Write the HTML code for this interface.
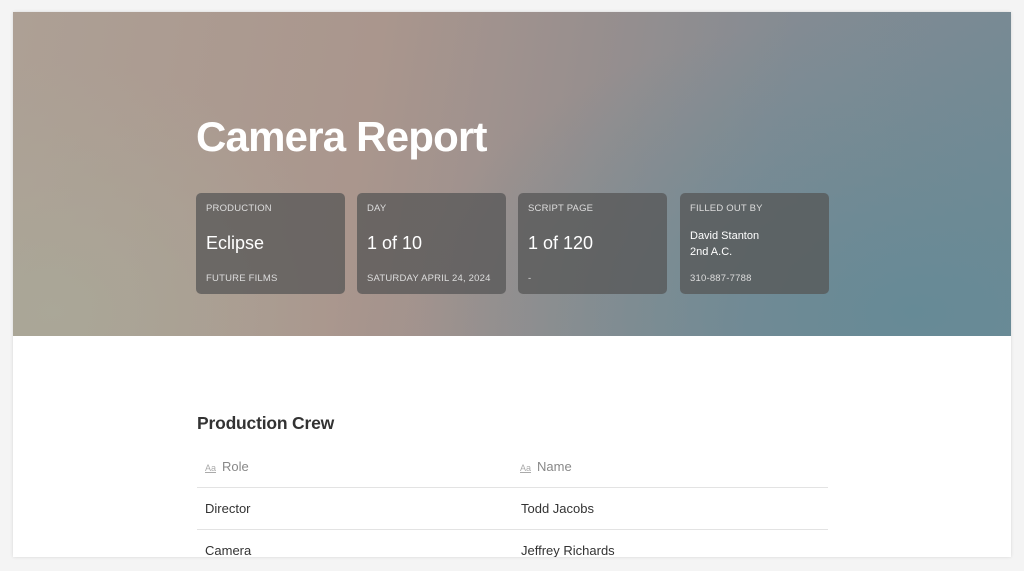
<!DOCTYPE html>
<html><head><meta charset="utf-8"><style>
*{margin:0;padding:0;box-sizing:border-box}
body{width:1024px;height:571px;overflow:hidden;background:#f4f4f4;font-family:"Liberation Sans",sans-serif;position:relative}
.frame{position:absolute;left:13px;top:12px;width:998px;height:545px;background:#fff;overflow:hidden;box-shadow:0 0 3px rgba(0,0,0,.12)}
.hero{position:absolute;left:0;top:0;width:998px;height:324px;
background:
radial-gradient(ellipse 500px 300px at 900px 300px,rgba(100,138,150,.9),rgba(100,138,150,0) 100%),
radial-gradient(ellipse 300px 250px at 40px 300px,rgba(170,168,152,.9),rgba(170,168,152,0) 100%),
linear-gradient(100deg,#ada095 0%,#aa968d 35%,#988f8e 55%,#838b93 75%,#758a94 100%);}
h1{position:absolute;left:183px;top:101px;color:#fff;font-size:42px;font-weight:bold;letter-spacing:-0.8px}
.card{position:absolute;top:181px;width:149px;height:101px;background:rgba(85,85,85,.75);border-radius:5px;color:#fff}
.lab{position:absolute;left:10px;top:10px;font-size:9.5px;color:#ddd;letter-spacing:.2px}
.val{position:absolute;left:10px;top:40px;font-size:18px}
.sub{position:absolute;left:10px;top:80px;font-size:9.5px;color:#ddd;letter-spacing:.2px}
h2{position:absolute;left:184px;top:401px;font-size:17.5px;font-weight:bold;color:#333;letter-spacing:-0.2px}
.th{position:absolute;top:447px;font-size:13px;color:#888}
.th small{font-size:9px;text-decoration:underline;color:#aaa;margin-right:6px}
.td{position:absolute;font-size:13px;color:#333}
.line{position:absolute;left:184px;width:631px;height:1px;background:#e3e3e3}
</style></head><body>
<div class="frame">
<div class="hero">
<h1>Camera Report</h1>
<div class="card" style="left:183px"><div class="lab">PRODUCTION</div><div class="val">Eclipse</div><div class="sub">FUTURE FILMS</div></div>
<div class="card" style="left:344px"><div class="lab">DAY</div><div class="val">1 of 10</div><div class="sub">SATURDAY APRIL 24, 2024</div></div>
<div class="card" style="left:505px"><div class="lab">SCRIPT PAGE</div><div class="val">1 of 120</div><div class="sub">-</div></div>
<div class="card" style="left:667px"><div class="lab">FILLED OUT BY</div><div class="val" style="top:35px;font-size:11px;line-height:16px">David Stanton<br>2nd A.C.</div><div class="sub">310-887-7788</div></div>
</div>
<h2>Production Crew</h2>
<div class="th" style="left:192px"><small>Aa</small>Role</div>
<div class="th" style="left:507px"><small>Aa</small>Name</div>
<div class="line" style="top:475px"></div>
<div class="td" style="left:192px;top:489px">Director</div>
<div class="td" style="left:508px;top:489px">Todd Jacobs</div>
<div class="line" style="top:517px"></div>
<div class="td" style="left:192px;top:531px">Camera</div>
<div class="td" style="left:508px;top:531px">Jeffrey Richards</div>
</div>
</body></html>
